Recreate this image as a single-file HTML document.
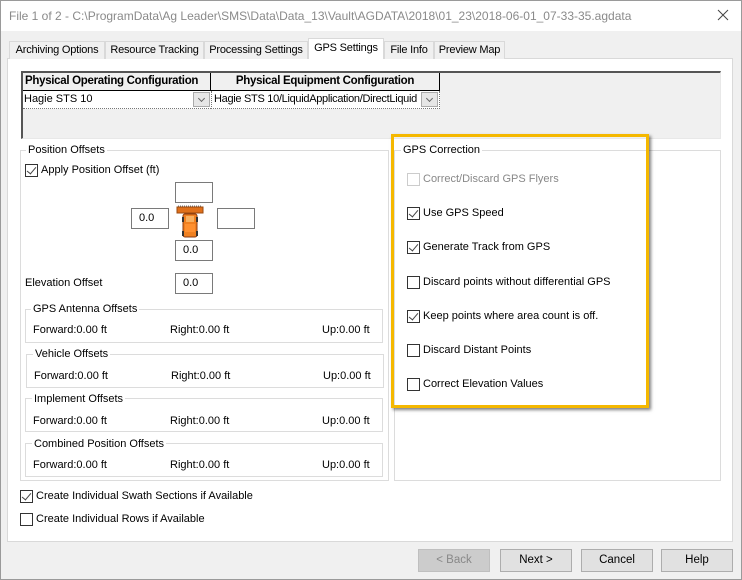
<!DOCTYPE html>
<html><head><style>
*{box-sizing:border-box;margin:0;padding:0}
body{width:742px;height:580px;background:#f0f0f0;font-family:"Liberation Sans",sans-serif;font-size:11px;color:#000;position:relative;overflow:hidden}
.a{position:absolute;white-space:nowrap}
.win{left:0;top:0;width:742px;height:580px;border:1px solid #9a9a9a}
.title{left:1px;top:1px;width:740px;height:30px;background:#fff;color:#8a8a8a;font-size:12px;line-height:30px;padding-left:8px}
.tab{top:41px;height:18px;border:1px solid #d9d9d9;border-bottom:none;background:#f0f0f0;line-height:16px;text-align:center;font-size:11px;letter-spacing:-0.2px}
.pane{left:7px;top:58px;width:726px;height:484px;background:#fff;border:1px solid #d9d9d9}
.grp{border:1px solid #dcdcdc}
.lg{background:#fff;padding:0 2px;line-height:12px}
.cb{width:13px;height:13px;border:1px solid #333;background:#fff}
.cb.c::after{content:"";position:absolute;left:3px;top:0px;width:4px;height:8px;border:solid #444;border-width:0 1.2px 1.2px 0;transform:rotate(40deg)}
.cb.d{border-color:#ccc}
.tb{border:1px solid #7a7a7a;background:#fff;height:21px;line-height:19px;padding-left:7px}
.btn{top:549px;width:72px;height:23px;border:1px solid #adadad;background:#e1e1e1;text-align:center;line-height:21px;font-size:11.5px}
.dd{width:17px;height:15px;border:1px solid #aaa;background:#e6e6e6}
.dd::after{content:"";position:absolute;left:5px;top:3px;width:4px;height:4px;border:solid #666;border-width:0 1px 1px 0;transform:rotate(45deg)}
.hd{font-weight:bold;font-size:11.5px;letter-spacing:-0.3px;line-height:17px}
</style></head><body>
<div class="a win"></div>
<div class="a title">File 1 of 2 - C:\ProgramData\Ag Leader\SMS\Data\Data_13\Vault\AGDATA\2018\01_23\2018-06-01_07-33-35.agdata</div>
<svg class="a" style="left:717px;top:9px" width="12" height="12"><path d="M1 1L11 11M11 1L1 11" stroke="#444" stroke-width="1"/></svg>

<div class="a pane"></div>
<div class="a tab" style="left:9px;width:96px">Archiving Options</div>
<div class="a tab" style="left:105px;width:99px">Resource Tracking</div>
<div class="a tab" style="left:204px;width:104px">Processing Settings</div>
<div class="a tab" style="left:308px;top:38px;height:21px;width:76px;background:#fff;line-height:19px">GPS Settings</div>
<div class="a tab" style="left:384px;width:50px">File Info</div>
<div class="a tab" style="left:434px;width:71px">Preview Map</div>

<!-- grid -->
<div class="a" style="left:21px;top:71px;width:700px;height:68px;background:#f0f0f0;border-top:2px solid #555;border-left:2px solid #555;border-right:1px solid #e8e8e8;border-bottom:1px solid #e8e8e8"></div>
<div class="a hd" style="left:23px;top:73px;width:188px;height:18px;border-right:1px solid #000;border-bottom:1px solid #000;padding-left:2px;overflow:hidden">Physical Operating Configuration</div>
<div class="a hd" style="left:211px;top:73px;width:229px;height:18px;border-right:1px solid #000;border-bottom:1px solid #000;text-align:center;overflow:hidden">Physical Equipment Configuration</div>
<div class="a" style="left:23px;top:91px;width:188px;height:18px;background:#fff;border-bottom:1px dotted #777;line-height:17px;padding-left:1px">Hagie STS 10</div>
<div class="a dd" style="left:193px;top:92px"></div>
<div class="a" style="left:211px;top:91px;width:229px;height:18px;background:#fff;border:1px dotted #777;border-top:none;line-height:17px;padding-left:2px;overflow:hidden;letter-spacing:-0.3px">Hagie STS 10/LiquidApplication/DirectLiquid</div>
<div class="a dd" style="left:421px;top:92px"></div>

<!-- position offsets -->
<div class="a grp" style="left:20px;top:150px;width:369px;height:331px"></div>
<div class="a lg" style="left:26px;top:144px">Position Offsets</div>
<div class="a cb c" style="left:25px;top:164px"></div>
<div class="a" style="left:41px;top:164px">Apply Position Offset (ft)</div>
<div class="a tb" style="left:175px;top:182px;width:38px"></div>
<div class="a tb" style="left:131px;top:208px;width:38px">0.0</div>
<div class="a tb" style="left:217px;top:208px;width:38px"></div>
<div class="a tb" style="left:175px;top:240px;width:38px">0.0</div>
<svg class="a" style="left:176px;top:205px" width="30" height="33" viewBox="0 0 30 33">
<rect x="1" y="2" width="26" height="6" fill="#e0701a" stroke="#9a4a10" stroke-width="1"/>
<path d="M2 1h24" stroke="#777" stroke-dasharray="1 1"/>
<rect x="7" y="9" width="14" height="23" rx="2" fill="#f08020" stroke="#8a3a10"/>
<rect x="10" y="11" width="8" height="6" fill="#f8b060"/>
<rect x="9" y="19" width="10" height="8" fill="#ff9030"/>
<rect x="6" y="12" width="2" height="5" fill="#333"/><rect x="20" y="12" width="2" height="5" fill="#333"/>
<rect x="6" y="26" width="2" height="5" fill="#333"/><rect x="20" y="26" width="2" height="5" fill="#333"/>
</svg>
<div class="a" style="left:25px;top:277px">Elevation Offset</div>
<div class="a tb" style="left:175px;top:273px;width:38px">0.0</div>

<div class="a grp" style="left:25px;top:309px;width:358px;height:34px"></div>
<div class="a lg" style="left:31px;top:303px">GPS Antenna Offsets</div>
<div class="a" style="left:33px;top:324px">Forward:0.00 ft</div><div class="a" style="left:170px;top:324px">Right:0.00 ft</div><div class="a" style="left:322px;top:324px">Up:0.00 ft</div>

<div class="a grp" style="left:26px;top:354px;width:358px;height:34px"></div>
<div class="a lg" style="left:33px;top:348px">Vehicle Offsets</div>
<div class="a" style="left:34px;top:370px">Forward:0.00 ft</div><div class="a" style="left:171px;top:370px">Right:0.00 ft</div><div class="a" style="left:323px;top:370px">Up:0.00 ft</div>

<div class="a grp" style="left:25px;top:398px;width:358px;height:34px"></div>
<div class="a lg" style="left:32px;top:393px">Implement Offsets</div>
<div class="a" style="left:33px;top:415px">Forward:0.00 ft</div><div class="a" style="left:170px;top:415px">Right:0.00 ft</div><div class="a" style="left:322px;top:415px">Up:0.00 ft</div>

<div class="a grp" style="left:25px;top:443px;width:358px;height:34px"></div>
<div class="a lg" style="left:32px;top:438px">Combined Position Offsets</div>
<div class="a" style="left:33px;top:459px">Forward:0.00 ft</div><div class="a" style="left:170px;top:459px">Right:0.00 ft</div><div class="a" style="left:322px;top:459px">Up:0.00 ft</div>

<!-- GPS correction -->
<div class="a grp" style="left:394px;top:150px;width:327px;height:331px"></div>
<div class="a" style="left:391px;top:134px;width:258px;height:274px;border:3px solid #f5b800;box-shadow:2px 2px 3px rgba(0,0,0,.5)"></div>
<div class="a lg" style="left:401px;top:144px">GPS Correction</div>
<div class="a cb d" style="left:407px;top:173px"></div><div class="a" style="left:423px;top:173px;color:#888">Correct/Discard GPS Flyers</div>
<div class="a cb c" style="left:407px;top:207px"></div><div class="a" style="left:423px;top:207px">Use GPS Speed</div>
<div class="a cb c" style="left:407px;top:241px"></div><div class="a" style="left:423px;top:241px">Generate Track from GPS</div>
<div class="a cb" style="left:407px;top:276px"></div><div class="a" style="left:423px;top:276px">Discard points without differential GPS</div>
<div class="a cb c" style="left:407px;top:310px"></div><div class="a" style="left:423px;top:310px">Keep points where area count is off.</div>
<div class="a cb" style="left:407px;top:344px"></div><div class="a" style="left:423px;top:344px">Discard Distant Points</div>
<div class="a cb" style="left:407px;top:378px"></div><div class="a" style="left:423px;top:378px">Correct Elevation Values</div>

<div class="a cb c" style="left:20px;top:490px"></div><div class="a" style="left:36px;top:490px">Create Individual Swath Sections if Available</div>
<div class="a cb" style="left:20px;top:513px"></div><div class="a" style="left:36px;top:513px">Create Individual Rows if Available</div>

<div class="a btn" style="left:418px;background:#ccc;border-color:#bfbfbf;color:#888">&lt; Back</div>
<div class="a btn" style="left:500px">Next &gt;</div>
<div class="a btn" style="left:581px">Cancel</div>
<div class="a btn" style="left:661px">Help</div>
</body></html>
